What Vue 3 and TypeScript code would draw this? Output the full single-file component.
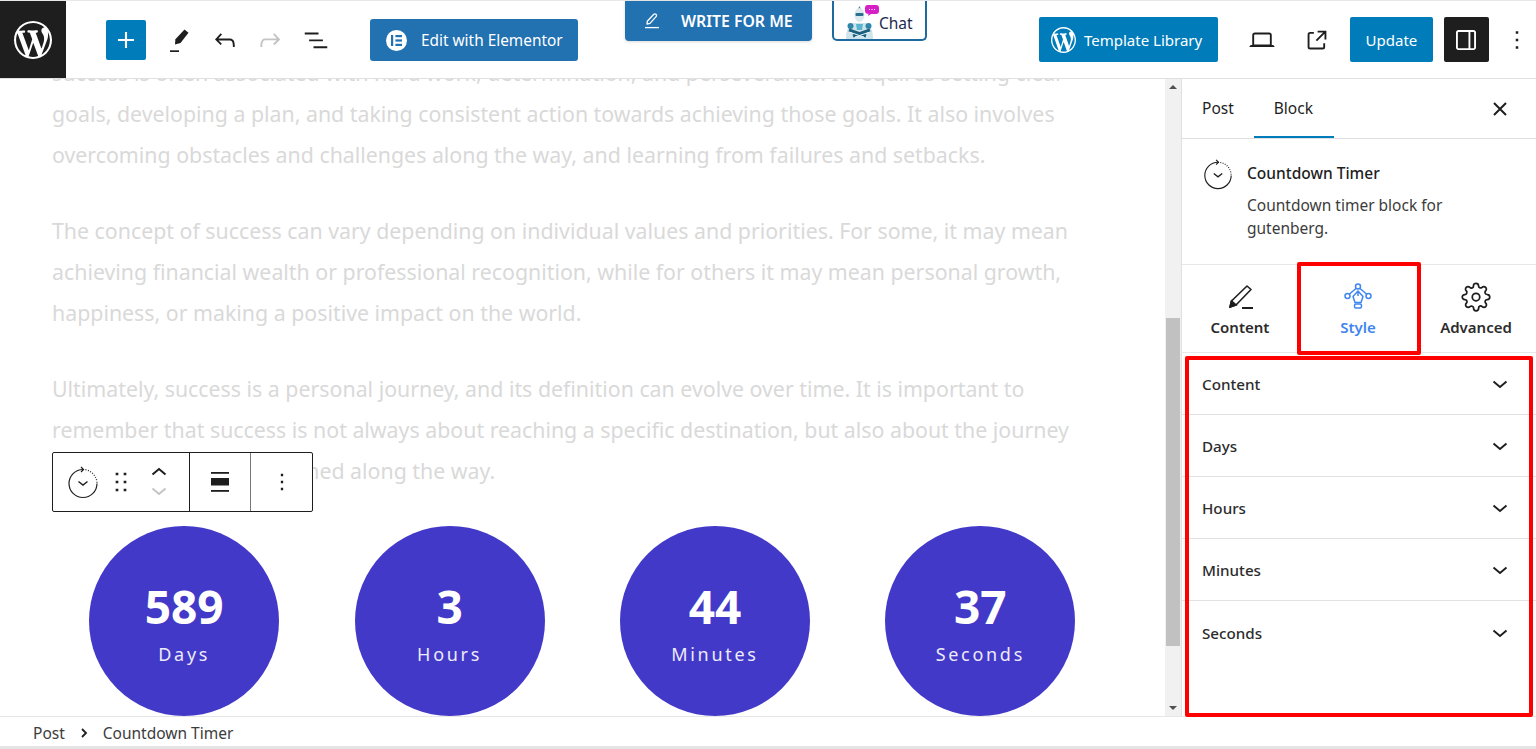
<script setup lang="ts">
const paragraphs = [
  [
    'success is often associated with hard work, determination, and perseverance. It requires setting clear',
    'goals, developing a plan, and taking consistent action towards achieving those goals. It also involves',
    'overcoming obstacles and challenges along the way, and learning from failures and setbacks.',
  ],
  [
    'The concept of success can vary depending on individual values and priorities. For some, it may mean',
    'achieving financial wealth or professional recognition, while for others it may mean personal growth,',
    'happiness, or making a positive impact on the world.',
  ],
  [
    'Ultimately, success is a personal journey, and its definition can evolve over time. It is important to',
    'remember that success is not always about reaching a specific destination, but also about the journey',
    'itself and the lessons learned along the way.',
  ],
]

const counters = [
  { value: '589', label: 'Days' },
  { value: '3', label: 'Hours' },
  { value: '44', label: 'Minutes' },
  { value: '37', label: 'Seconds' },
]

const panels = ['Content', 'Days', 'Hours', 'Minutes', 'Seconds']

const wpLogo =
  'M20 10c0-5.51-4.49-10-10-10C4.48 0 0 4.49 0 10c0 5.52 4.48 10 10 10 5.51 0 10-4.48 10-10zM7.78 15.37L4.37 6.22c.55-.02 1.17-.08 1.17-.08.5-.06.44-1.13-.06-1.11 0 0-1.45.11-2.37.11-.18 0-.37 0-.58-.01C4.12 2.69 6.87 1.11 10 1.11c2.33 0 4.45.87 6.05 2.34-.68-.11-1.65.39-1.65 1.58 0 .74.45 1.36.9 2.1.35.61.55 1.36.55 2.46 0 1.49-1.4 5-1.4 5l-3.03-8.37c.54-.02.82-.17.82-.17.5-.05.44-1.25-.06-1.22 0 0-1.44.12-2.38.12-.87 0-2.33-.12-2.33-.12-.5-.03-.56 1.2-.06 1.22l.92.08 1.26 3.41zM17.41 10c.24-.64.74-1.87.43-4.25.7 1.29 1.05 2.71 1.05 4.25 0 3.29-1.73 6.24-4.4 7.78.97-2.59 1.94-5.2 2.92-7.78zM6.1 18.09C3.12 16.65 1.11 13.53 1.11 10c0-1.3.23-2.48.72-3.59C3.25 10.3 4.67 14.2 6.1 18.09zm4.03-6.63l2.58 6.98c-.86.29-1.76.45-2.71.45-.79 0-1.57-.11-2.29-.33.81-2.38 1.62-4.74 2.42-7.1z'
const moreVertical = 'M13 19h-2v-2h2v2zm0-6h-2v-2h2v2zm0-6h-2V5h2v2z'
const gear =
  'M12 15a3 3 0 1 0 0-6 3 3 0 0 0 0 6zM19.4 15a1.65 1.65 0 0 0 .33 1.82l.06.06a2 2 0 0 1 0 2.83 2 2 0 0 1-2.83 0l-.06-.06a1.65 1.65 0 0 0-1.82-.33 1.65 1.65 0 0 0-1 1.51V21a2 2 0 0 1-2 2 2 2 0 0 1-2-2v-.09A1.65 1.65 0 0 0 9 19.4a1.65 1.65 0 0 0-1.82.33l-.06.06a2 2 0 0 1-2.83 0 2 2 0 0 1 0-2.83l.06-.06a1.65 1.65 0 0 0 .33-1.82 1.65 1.65 0 0 0-1.51-1H3a2 2 0 0 1-2-2 2 2 0 0 1 2-2h.09A1.65 1.65 0 0 0 4.6 9a1.65 1.65 0 0 0-.33-1.82l-.06-.06a2 2 0 0 1 0-2.83 2 2 0 0 1 2.83 0l.06.06a1.65 1.65 0 0 0 1.82.33H9a1.65 1.65 0 0 0 1-1.51V3a2 2 0 0 1 2-2 2 2 0 0 1 2 2v.09a1.65 1.65 0 0 0 1 1.51 1.65 1.65 0 0 0 1.82-.33l.06-.06a2 2 0 0 1 2.83 0 2 2 0 0 1 0 2.83l-.06.06a1.65 1.65 0 0 0-.33 1.82V9a1.65 1.65 0 0 0 1.51 1H21a2 2 0 0 1 2 2 2 2 0 0 1-2 2h-.09a1.65 1.65 0 0 0-1.51 1z'
</script>

<template>
  <div class="page">
    <header class="topbar">
      <div class="wp-tile">
        <svg width="38" height="38" viewBox="0 0 20 20"><path :d="wpLogo" fill="#fff" /></svg>
      </div>

      <button class="add-btn">
        <svg width="32" height="32" viewBox="0 0 24 24"><path d="M18 11.2h-5.2V6h-1.6v5.2H6v1.6h5.2V18h1.6v-5.2H18z" fill="#fff" /></svg>
      </button>

      <div class="tools">
        <svg width="30" height="30" viewBox="0 0 30 30">
          <path d="M20.5 4.5l4 3.2-8 10.3-5.500 1.500.4-5.200z" fill="#1e1e1e" />
          <rect x="6" y="25.3" width="9" height="1.7" fill="#1e1e1e" />
        </svg>
        <svg width="30" height="30" viewBox="0 0 24 24"><path d="M18.3 11.7c-.6-.6-1.4-.9-2.3-.9H6.7l2.9-3.3-1.1-1-4.5 5L8.5 16l1-1-2.7-2.7H16c.5 0 .9.2 1.3.5 1 1 1 3.4 1 4.5v.3h1.5v-.2c0-1.5 0-4.3-1.5-5.7z" fill="#1e1e1e" /></svg>
        <svg width="30" height="30" viewBox="0 0 24 24"><path d="M15.6 6.5l-1.1 1 2.9 3.3H8c-.9 0-1.7.3-2.3.9-1.4 1.5-1.4 4.2-1.4 5.6v.2h1.500v-.3c0-1.1 0-3.5 1-4.5.3-.3.7-.5 1.300-.5h9.200L14.500 15l1.100 1.100 4.600-4.600-4.600-5z" fill="#c4c4c4" /></svg>
        <svg width="30" height="30" viewBox="0 0 24 24"><path d="M3 6h11v1.500H3V6zm3.500 5.500h11V13h-11v-1.500zM21 17H10v1.500h11V17z" fill="#1e1e1e" /></svg>
      </div>

      <button class="elementor-btn">
        <span class="el-badge">
          <svg width="11" height="11" viewBox="0 0 10 10" fill="#2271b1">
            <rect x="0" y="0" width="2" height="10" /><rect x="4" y="0" width="6" height="2" /><rect x="4" y="4" width="6" height="2" /><rect x="4" y="8" width="6" height="2" />
          </svg>
        </span>
        Edit with Elementor
      </button>

      <button class="write-btn">
        <svg width="18" height="18" viewBox="0 0 18 18" fill="none" stroke="#fff" stroke-width="1.3">
          <path d="M10.8 2.2a1.7 1.7 0 0 1 2.5 2.2l-6.3 7-3 .8.3-3z" stroke-linejoin="round" />
          <path d="M2 15.6h14" />
        </svg>
        WRITE FOR ME
      </button>

      <div class="chat-btn">
        <svg class="robot" width="33" height="34" viewBox="0 0 33 34">
          <path d="M0 34C0 25 3 19 8 18h11c5 1 8 7 8 16z" fill="#cfe3ea" />
          <circle cx="4.5" cy="21" r="3" fill="#2e86a8" />
          <circle cx="22.5" cy="21" r="3" fill="#2e86a8" />
          <path d="M10 19h7l-1 6h-5z" fill="#5ab4cf" />
          <path d="M3 25l17 6M24 25L7 31" stroke="#1b5f80" stroke-width="3" fill="none" />
          <path d="M3 27l15 5M24 27L9 32" stroke="#e3f1f5" stroke-width="1" fill="none" />
          <path d="M13.5 1l1.5 3h-3z" fill="#3f8aa8" />
          <ellipse cx="13.5" cy="10" rx="5" ry="7" fill="#dbe9ee" />
          <rect x="9.5" y="8" width="8" height="3" rx="1" fill="#2a6f8f" />
          <path d="M21 0h9a3 3 0 0 1 3 3v3a3 3 0 0 1-3 3h-5l-3 2 .5-2.2A3 3 0 0 1 19 6V3a3 3 0 0 1 2-3z" fill="#d61fc4" />
          <path d="M23 4.5h1M25.5 4.5h1M28 4.5h1" stroke="#fff" stroke-width="1" />
        </svg>
        <span>Chat</span>
      </div>

      <button class="library-btn">
        <svg width="25" height="26" viewBox="0 0 20 20" preserveAspectRatio="none"><path :d="wpLogo" fill="#fff" /></svg>
        Template Library
      </button>

      <div class="view-icons">
        <svg width="30" height="30" viewBox="0 0 24 24"><path d="M20.5 16h-.7V8c0-1.1-.9-2-2-2H6.2c-1.1 0-2 .9-2 2v8h-.7c-.8 0-1.5.7-1.5 1.5h20c0-.8-.7-1.5-1.5-1.5zM5.7 8c0-.3.2-.5.5-.5h11.600c.3 0 .5.2.5.5v7.600H5.700V8z" fill="#1e1e1e" /></svg>
        <svg width="30" height="30" viewBox="0 0 24 24"><path d="M19.5 4.5h-7V6h4.44l-5.97 6.03 1.06 1.06L18 7.06v4.44h1.5v-7Zm-13 1a2 2 0 0 0-2 2v10a2 2 0 0 0 2 2h10a2 2 0 0 0 2-2v-3H17v3a.5.5 0 0 1-.5.5h-10a.5.5 0 0 1-.5-.5v-10a.5.5 0 0 1 .5-.5h3V5.5h-3Z" fill="#1e1e1e" /></svg>
      </div>

      <button class="update-btn">Update</button>
      <button class="drawer-btn">
        <svg width="30" height="30" viewBox="0 0 24 24"><path d="M18 4H6c-1.100 0-2 .9-2 2v12c0 1.100.9 2 2 2h12c1.100 0 2-.9 2-2V6c0-1.100-.9-2-2-2zm-4 14.500H6c-.3 0-.5-.2-.5-.5V6c0-.3.2-.5.5-.5h8v13zm4.500-.5c0 .3-.2.5-.5.5h-2.500v-13H18c.3 0 .5.2.5.5v12z" fill="#fff" /></svg>
      </button>
      <svg class="more" width="30" height="30" viewBox="0 0 24 24"><path :d="moreVertical" fill="#1e1e1e" /></svg>
    </header>

    <div class="workspace">
      <main class="canvas">
        <div class="content">
          <p v-for="(lines, i) in paragraphs" :key="i" class="para">
            <span v-for="line in lines" :key="line" class="line">{{ line }}</span>
          </p>

          <div class="counters">
            <div v-for="item in counters" :key="item.label" class="cell">
              <div class="circle">
                <span class="num">{{ item.value }}</span>
                <span class="lbl">{{ item.label }}</span>
              </div>
            </div>
          </div>

          <div class="block-toolbar">
            <div class="tb-group first">
              <svg width="34" height="34" viewBox="0 0 34 34" fill="none" stroke="#1e1e1e" stroke-width="1.2">
                <path d="M17 4.5a14 14 0 1 0 14 14" />
                <path d="M17 4.5a14 14 0 0 1 14 14" stroke-dasharray="1 1.5" />
                <path d="M15 2l2.5 2.5L15 7" />
                <path d="M12.5 16.500l4.500 3.500 4.500-3.500" stroke-width="1.4" />
              </svg>
              <svg class="drag" width="32" height="32" viewBox="0 0 24 24"><path d="M8 7h2V5H8v2zm0 6h2v-2H8v2zm0 6h2v-2H8v2zm6-14v2h2V5h-2zm0 8h2v-2h-2v2zm0 6h2v-2h-2v2z" fill="#1e1e1e" /></svg>
              <div class="movers">
                <svg width="24" height="20" viewBox="0 0 24 20" fill="none" stroke="#1e1e1e" stroke-width="2"><path d="M5.5 12.500L12 7l6.500 5.500" /></svg>
                <svg width="24" height="20" viewBox="0 0 24 20" fill="none" stroke="#c4c4c4" stroke-width="2"><path d="M5.5 6.500L12 12l6.500-5.500" /></svg>
              </div>
            </div>
            <div class="tb-group align">
              <svg width="24" height="24" viewBox="0 0 24 24" fill="#1e1e1e">
                <rect x="3" y="2" width="18" height="1.8" /><rect x="3" y="8" width="18" height="7.5" /><rect x="3" y="20" width="18" height="1.8" />
              </svg>
            </div>
            <div class="tb-group last">
              <svg width="28" height="28" viewBox="0 0 24 24"><path :d="moreVertical" fill="#1e1e1e" /></svg>
            </div>
          </div>
        </div>
      </main>

      <div class="scrollbar">
        <span class="arrow up"></span>
        <div class="track"><div class="thumb"></div></div>
        <span class="arrow down"></span>
      </div>

      <aside class="sidebar">
        <div class="side-tabs">
          <span class="side-tab">Post</span>
          <span class="side-tab active">Block</span>
          <svg class="close" width="24" height="24" viewBox="0 0 24 24" fill="none" stroke="#1e1e1e" stroke-width="2"><path d="M6 6l12 12M18 6L6 18" /></svg>
        </div>

        <div class="block-card">
          <svg width="32" height="32" viewBox="0 0 34 34" fill="none" stroke="#1e1e1e" stroke-width="1.2">
            <path d="M17 4.5a14 14 0 1 0 14 14" />
            <path d="M17 4.5a14 14 0 0 1 14 14" stroke-dasharray="1 1.5" />
            <path d="M15 2l2.5 2.500L15 7" />
            <path d="M12.5 16.500l4.500 3.500 4.500-3.500" stroke-width="1.4" />
          </svg>
          <div>
            <div class="card-title">Countdown Timer</div>
            <div class="card-desc">Countdown timer block for gutenberg.</div>
          </div>
        </div>

        <div class="mode-tabs">
          <div class="mode">
            <svg width="30" height="30" viewBox="0 0 30 30" fill="none" stroke="#1e1e1e" stroke-width="1.6">
              <path d="M22 4l4 3.500L11 23l-6 2 1.500-6z" stroke-linejoin="round" />
              <path d="M5 25l1.500-6 4.500 4z" fill="#1e1e1e" />
              <path d="M17 26h11" stroke-width="2" />
            </svg>
            <span>Content</span>
          </div>
          <div class="mode current">
            <svg width="30" height="30" viewBox="0 0 30 30" fill="none" stroke="#3f86f0" stroke-width="1.5">
              <circle cx="15" cy="4.5" r="2.5" /><circle cx="4.5" cy="14" r="2.5" /><circle cx="25.5" cy="14" r="2.5" />
              <path d="M13 6.5L6.5 12M17 6.500l6.500 5.500" />
              <path d="M15 9l5 5.500-2 6h-6l-2-6z" stroke-linejoin="round" />
              <path d="M15 9v5" />
              <rect x="11.5" y="22" width="7" height="4" rx="1.5" />
            </svg>
            <span>Style</span>
          </div>
          <div class="mode">
            <svg width="30" height="30" viewBox="0 0 24 24" fill="none" stroke="#1e1e1e" stroke-width="1.4"><path :d="gear" /></svg>
            <span>Advanced</span>
          </div>
        </div>

        <div class="panels">
          <div v-for="name in panels" :key="name" class="panel-row">
            <span>{{ name }}</span>
            <svg width="24" height="24" viewBox="0 0 24 24" fill="none" stroke="#1e1e1e" stroke-width="1.9"><path d="M5.5 9.500l6.500 5.500 6.500-5.500" /></svg>
          </div>
        </div>
      </aside>
    </div>

    <footer class="crumbs">
      <span>Post</span>
      <svg width="18" height="18" viewBox="0 0 18 18" fill="none" stroke="#1e1e1e" stroke-width="1.8"><path d="M7 5l4 4-4 4" /></svg>
      <span>Countdown Timer</span>
    </footer>
  </div>
</template>

<style scoped>
.page {
  height: 749px;
  display: flex;
  flex-direction: column;
  overflow: hidden;
  background: #fff;
  font-family: "Noto Sans", "Open Sans", sans-serif;
  color: #1e1e1e;
}

button {
  border: none;
  font-family: inherit;
  color: #fff;
  display: flex;
  align-items: center;
  justify-content: center;
  border-radius: 2px;
  padding: 0;
}

/* top bar */
.topbar {
  height: 79px;
  flex: none;
  box-sizing: border-box;
  display: flex;
  align-items: center;
  border-top: 1px solid #e8e8e8;
  border-bottom: 1px solid #e0e0e0;
  background: #fff;
  position: relative;
  z-index: 2;
}

.wp-tile {
  width: 66px;
  height: 77px;
  background: #1e1e1e;
  display: flex;
  align-items: center;
  justify-content: center;
}

.add-btn {
  width: 40px;
  height: 40px;
  margin-left: 40px;
  background: #007cba;
}

.tools {
  display: flex;
  gap: 15.67px;
  margin-left: 18px;
}

.elementor-btn {
  width: 208px;
  height: 42px;
  margin: 1px 0 0 39px;
  background: #2271b1;
  border-radius: 3px;
  justify-content: flex-start;
  padding-left: 16px;
  gap: 14px;
  font-size: 15.4px;
}

.el-badge {
  width: 21px;
  height: 21px;
  border-radius: 50%;
  background: #fff;
  display: flex;
  align-items: center;
  justify-content: center;
}

.write-btn {
  width: 187px;
  height: 40px;
  margin-left: 47px;
  align-self: flex-start;
  background: #2271b1;
  border-radius: 0 0 4px 4px;
  box-shadow: 0 1px 3px rgba(0, 0, 0, 0.15);
  justify-content: flex-start;
  padding-left: 18px;
  gap: 20px;
  font-size: 15.8px;
  font-weight: 600;
}

.chat-btn {
  width: 95px;
  height: 40px;
  margin-left: 20px;
  align-self: flex-start;
  box-sizing: border-box;
  border: 2px solid #1c6aa0;
  border-top: none;
  border-radius: 0 0 5px 5px;
  display: flex;
  align-items: flex-end;
  padding-left: 12px;
  font-size: 15.5px;
  color: #1d2b4f;
}

.chat-btn span {
  line-height: 20px;
  margin-bottom: 6px;
}

.robot {
  display: block;
  flex: none;
}

.library-btn {
  width: 179px;
  height: 45px;
  margin-left: 112px;
  background: #007cba;
  justify-content: flex-start;
  padding-left: 12px;
  gap: 8px;
  font-size: 15px;
}

.view-icons {
  display: flex;
  gap: 25.5px;
  margin-left: 29px;
}

.update-btn {
  width: 83px;
  height: 45px;
  margin-left: 17.5px;
  background: #007cba;
  font-size: 15px;
}

.drawer-btn {
  width: 45px;
  height: 45px;
  margin-left: 11px;
  background: #1e1e1e;
}

.more {
  margin-left: 13px;
}

/* editor area */
.workspace {
  flex: 1;
  min-height: 0;
  display: flex;
}

.canvas {
  flex: 1;
  min-width: 0;
  overflow: hidden;
}

.content {
  position: relative;
  margin: -27px 0 0 52px;
  width: 1061px;
}

.para {
  margin: 0 0 35px;
  font-size: 21.33px;
  line-height: 41px;
  color: #d9d9d9;
  white-space: nowrap;
}

.line {
  display: block;
}

.counters {
  display: grid;
  grid-template-columns: repeat(4, 1fr);
  margin-left: -0.5px;
}

.cell {
  display: flex;
  justify-content: center;
}

.circle {
  width: 190px;
  height: 190px;
  box-sizing: border-box;
  padding-top: 8px;
  border-radius: 50%;
  background: #4339c8;
  color: #fff;
  display: flex;
  flex-direction: column;
  align-items: center;
  justify-content: center;
}

.num {
  font-size: 46px;
  line-height: 58px;
  font-weight: 700;
}

.lbl {
  font-size: 18px;
  line-height: 38px;
  letter-spacing: 2.7px;
  opacity: 0.9;
}

.block-toolbar {
  position: absolute;
  left: 0;
  top: 400px;
  height: 60px;
  box-sizing: border-box;
  display: flex;
  background: #fff;
  border: 1px solid #1e1e1e;
  border-radius: 2px;
}

.tb-group {
  display: flex;
  align-items: center;
  justify-content: center;
  width: 60px;
  border-left: 1px solid #1e1e1e;
}

.tb-group.first {
  width: 136px;
  border-left: none;
  justify-content: flex-start;
  padding-left: 13px;
  box-sizing: border-box;
}

.tb-group.last {
  width: 61px;
  border-left-color: #777;
}

.drag {
  margin-left: 5px;
}

.movers {
  display: flex;
  flex-direction: column;
  margin-left: 10px;
}

.movers svg {
  display: block;
}

/* scrollbar */
.scrollbar {
  width: 16px;
  flex: none;
  background: #f1f1f1;
  display: flex;
  flex-direction: column;
  align-items: center;
}

.arrow {
  flex: none;
  width: 0;
  height: 0;
  margin: 6px 0;
  border-left: 4px solid transparent;
  border-right: 4px solid transparent;
}

.arrow.up {
  border-bottom: 4px solid #505050;
}

.arrow.down {
  border-top: 4px solid #505050;
}

.track {
  flex: 1;
  width: 100%;
  display: flex;
  flex-direction: column;
}

.thumb {
  width: 14px;
  height: 328px;
  margin: 223px 1px 0;
  background: #c1c1c1;
}

/* sidebar */
.sidebar {
  width: 355px;
  flex: none;
  box-sizing: border-box;
  border-left: 1px solid #e0e0e0;
}

.side-tabs {
  height: 59px;
  display: flex;
  align-items: center;
  border-bottom: 1px solid #e0e0e0;
  padding-left: 20px;
  font-size: 15.5px;
}

.side-tab {
  height: 100%;
  display: flex;
  align-items: center;
  padding-bottom: 2px;
  box-sizing: border-box;
}

.side-tab.active {
  margin-left: 20px;
  padding: 0 21px 2px 20px;
  box-shadow: inset 0 -2px 0 #007cba;
}

.close {
  margin-left: auto;
  margin-right: 24px;
}

.block-card {
  height: 126px;
  box-sizing: border-box;
  display: flex;
  gap: 13px;
  padding: 19px 20px 0;
  border-bottom: 1px solid #e8e8e8;
  font-size: 15.5px;
}

.block-card svg {
  flex: none;
}

.card-title {
  font-weight: 500;
  line-height: 32px;
  margin-top: -1px;
}

.card-desc {
  line-height: 23px;
  margin-top: 5px;
  color: #3c3c3c;
  width: 240px;
}

.mode-tabs {
  height: 87px;
  display: grid;
  grid-template-columns: repeat(3, 118px);
  margin-left: -1px;
  border-bottom: 1px solid #e8e8e8;
}

.mode {
  position: relative;
  display: flex;
  flex-direction: column;
  align-items: center;
  padding-top: 17px;
  box-sizing: border-box;
  font-size: 15px;
  line-height: 20px;
  font-weight: 600;
  color: #2c2c2c;
  gap: 5px;
}

.mode.current {
  color: #3f86f0;
}

.mode.current::after {
  content: "";
  position: absolute;
  inset: -3px -4px -3px -2px;
  border: 4px solid #fe0000;
  border-radius: 2px;
}

.panels {
  position: relative;
  height: 364px;
}

.panels::after {
  content: "";
  position: absolute;
  left: 3px;
  top: 3px;
  width: 348px;
  height: 361px;
  box-sizing: border-box;
  border: 4px solid #fe0000;
  border-radius: 2px;
}

.panel-row {
  height: 62px;
  box-sizing: border-box;
  display: flex;
  align-items: center;
  justify-content: space-between;
  padding: 1px 24px 0 20px;
  border-bottom: 1px solid #e2e2e2;
  font-size: 15.2px;
  font-weight: 500;
  color: #2c2c2c;
}

.panel-row:last-child {
  border-bottom: none;
}

/* footer */
.crumbs {
  height: 33px;
  flex: none;
  box-sizing: border-box;
  display: flex;
  align-items: center;
  gap: 10px;
  padding: 3px 0 0 33px;
  border-top: 1px solid #e6e6e6;
  border-bottom: 3px solid #e4e4e4;
  font-size: 15.5px;
  color: #3c3c3c;
  background: #fff;
}
</style>
